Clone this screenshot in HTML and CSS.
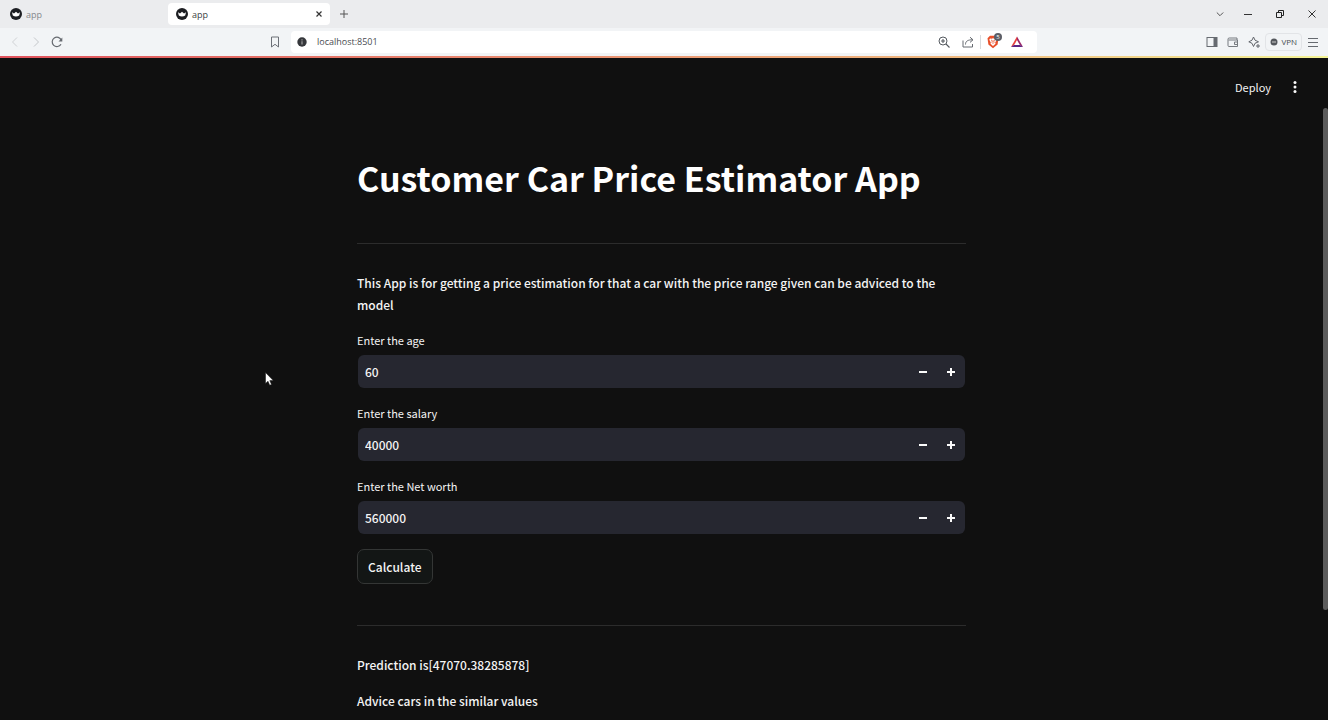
FILE: index.html
```html
<!DOCTYPE html>
<html lang="en">
<head>
    <meta charset="UTF-8">
    <meta name="viewport" content="width=device-width, initial-scale=1.0">
    <title>app</title>
    <link rel="stylesheet" href="styles.css">
</head>
<body>
    <!-- browser -->
    <div class="browser">
        <div class="tabs">
            <div class="tab">
                <svg class="favicon" viewBox="0 0 12 12"><circle cx="6" cy="6" r="6" fill="#1c1e22"/><path d="M2 4.200l2 1.300L6 3.800l2 1.700 2-1.300-.8 3.300Q6 9.500 2.800 7.500z" fill="#fff"/></svg>
                <span>app</span>
            </div>
            <div class="tab active">
                <svg class="favicon" viewBox="0 0 12 12"><circle cx="6" cy="6" r="6" fill="#1c1e22"/><path d="M2 4.200l2 1.300L6 3.800l2 1.700 2-1.300-.8 3.300Q6 9.500 2.800 7.500z" fill="#fff"/></svg>
                <span>app</span>
                <button class="tab-close" aria-label="Close tab"><svg width="6" height="6" viewBox="0 0 6 6"><path d="M.5.5l5 5M5.500.5l-5 5" stroke="#333" stroke-width="1.200"/></svg></button>
            </div>
            <button class="new-tab" aria-label="New tab"><svg width="8" height="8" viewBox="0 0 8 8"><path d="M4 0v8M0 4h8" stroke="#555" stroke-width="1"/></svg></button>
            <button class="search-tabs" aria-label="Search tabs"><svg width="8" height="8" viewBox="0 0 8 8"><path d="M.8 2.500L4 5.700l3.200-3.200" fill="none" stroke="#555"/></svg></button>
            <div class="window-btns">
                <button aria-label="Minimize"><svg width="8" height="8" viewBox="0 0 8 8"><path d="M0 4.500h8" stroke="#333"/></svg></button>
                <button aria-label="Restore"><svg width="8" height="8" viewBox="0 0 8 8"><path d="M.5 2.500h5v5h-5zM2.500 2.500v-2h5v5h-2" fill="none" stroke="#222"/></svg></button>
                <button aria-label="Close"><svg width="8" height="8" viewBox="0 0 8 8"><path d="M.5.5l7 7M7.500.5l-7 7" stroke="#333"/></svg></button>
            </div>
        </div>
        <div class="toolbar">
            <div class="nav">
                <button aria-label="Back"><svg width="12" height="12" viewBox="0 0 12 12"><path d="M8 1.500L3.500 6 8 10.500" fill="none" stroke="#d0d2d5"/></svg></button>
                <button aria-label="Forward"><svg width="12" height="12" viewBox="0 0 12 12"><path d="M4 1.500L8.500 6 4 10.500" fill="none" stroke="#c4c7ca"/></svg></button>
                <button aria-label="Reload"><svg width="12" height="12" viewBox="0 0 12 12"><path d="M10 8.200A4.700 4.700 0 1 1 10.300 4.200" fill="none" stroke="#666a70" stroke-width="1.200"/><path d="M11.300 1.500v4H7.500z" fill="#666a70"/></svg></button>
                <button class="bookmark" aria-label="Bookmark"><svg width="12" height="12" viewBox="0 0 12 12"><path d="M2.500 1h7v10L6 8.300 2.500 11z" fill="none" stroke="#6c7077"/></svg></button>
            </div>
            <div class="address">
                <svg width="10" height="10" viewBox="0 0 10 10"><circle cx="5" cy="5" r="4.700" fill="#35373b"/><path d="M5 4.300v3.200M5 2.300v1.100" stroke="#aaa" stroke-width="1.100"/></svg>
                <input class="url" type="text" value="localhost:8501" aria-label="Address">
                <button aria-label="Zoom"><svg width="12" height="12" viewBox="0 0 12 12"><circle cx="5" cy="5" r="4" fill="none" stroke="#555a60"/><path d="M8 8l3.500 3.500M3 5h4M5 3v4" stroke="#555a60" stroke-width="1.100"/></svg></button>
                <button aria-label="Share"><svg width="12" height="12" viewBox="0 0 12 12"><path d="M1 4.500v6.500h9.500V8M3.500 8.500C3.500 5 6 3.800 10.500 3.800M8 1.200l3 2.600-3 2.600" fill="none" stroke="#666a70"/></svg></button>
                <span class="divider"></span>
                <button class="shields" aria-label="Shields">
                    <svg width="12" height="14" viewBox="0 0 12 14"><path d="M3 .8h6l2.500 2.500-.9 6.200L6 13.300 1.400 9.500.5 3.300z" fill="#e8502a"/><path d="M3 3.500l1.500.3L6 3.300l1.500.5L9 3.500l.7 1.200-1.500 2.800.3 1.200L6 11 3.500 8.700l.3-1.200-1.500-2.800z" fill="#fff"/><path d="M4 5l1.300.6L5 7.500l1 1 1-1-.3-1.900L8 5" fill="none" stroke="#e8502a" stroke-width=".8"/></svg>
                    <span class="count">5</span>
                </button>
                <button aria-label="Rewards"><svg width="12" height="12" viewBox="0 0 12 12"><path d="M6 .5L0 11l3-1.700L6 4z" fill="#e8413c"/><path d="M6 .5L12 11 9 9.300 6 4z" fill="#9b2668"/><path d="M0 11h12L9 9H3z" fill="#5c2483"/></svg></button>
            </div>
            <div class="tools">
                <button aria-label="Sidebar"><svg width="12" height="12" viewBox="0 0 12 12"><rect x="1" y="1.500" width="10" height="9" fill="none" stroke="#666a70"/><path d="M7.500 1.500H11v9H7.500z" fill="#666a70"/></svg></button>
                <button aria-label="Wallet"><svg width="12" height="12" viewBox="0 0 12 12"><path d="M10 4V2H2.200A1.200 1.200 0 0 0 1 3.200V9.500a1 1 0 0 0 1 1h8.500V4H1.500M11 6H7.500v2.500H11" fill="none" stroke="#777b80"/></svg></button>
                <button aria-label="Leo"><svg width="12" height="12" viewBox="0 0 12 12"><path d="M5.500 1L7 4.200 10.500 5.800 7 7.300 5.500 10.500 4 7.300.8 5.800 4 4.200zM10 8v4M8 10h4" fill="none" stroke="#62666c"/></svg></button>
                <button class="vpn"><svg width="8" height="8" viewBox="0 0 8 8"><circle cx="4" cy="4" r="3.500" fill="#55585d"/><path d="M2 4h4" stroke="#ccc"/></svg>VPN</button>
                <button aria-label="Menu"><svg width="12" height="12" viewBox="0 0 12 12"><path d="M1 2.500h10M1 6.500h10M1 10.500h10" stroke="#666a70"/></svg></button>
            </div>
        </div>
    </div>

    <!-- app -->
    <div class="app">
        <div class="decoration"></div>
        <header class="app-header">
            <button class="deploy">Deploy</button>
            <button class="more" aria-label="Main menu"><svg width="4" height="12" viewBox="0 0 4 12"><circle cx="2" cy="1.500" r="1.500"/><circle cx="2" cy="6" r="1.500"/><circle cx="2" cy="10.500" r="1.500"/></svg></button>
        </header>
        <div class="view">
            <main class="content">
                <div class="block">
                    <h1>Customer Car Price Estimator App</h1>
                    <hr>
                    <p>This App is for getting a price estimation for that a car with the price range given can be adviced to the<br>model</p>
                    <div class="field">
                        <label for="age">Enter the age</label>
                        <div class="number">
                            <input id="age" type="number" value="60">
                            <button aria-label="Decrease age"><svg viewBox="0 0 8 8"><path d="M0 4h8"/></svg></button>
                            <button aria-label="Increase age"><svg viewBox="0 0 8 8"><path d="M0 4h8M4 0v8"/></svg></button>
                        </div>
                    </div>
                    <div class="field">
                        <label for="salary">Enter the salary</label>
                        <div class="number">
                            <input id="salary" type="number" value="40000">
                            <button aria-label="Decrease salary"><svg viewBox="0 0 8 8"><path d="M0 4h8"/></svg></button>
                            <button aria-label="Increase salary"><svg viewBox="0 0 8 8"><path d="M0 4h8M4 0v8"/></svg></button>
                        </div>
                    </div>
                    <div class="field">
                        <label for="worth">Enter the Net worth</label>
                        <div class="number">
                            <input id="worth" type="number" value="560000">
                            <button aria-label="Decrease net worth"><svg viewBox="0 0 8 8"><path d="M0 4h8"/></svg></button>
                            <button aria-label="Increase net worth"><svg viewBox="0 0 8 8"><path d="M0 4h8M4 0v8"/></svg></button>
                        </div>
                    </div>
                    <button class="calculate">Calculate</button>
                    <hr>
                    <p>Prediction is[47070.38285878]</p>
                    <p>Advice cars in the similar values</p>
                </div>
            </main>
            <div class="scroll"><div class="thumb"></div></div>
        </div>
    </div>

    <!-- mouse pointer -->
    <svg class="pointer" width="9" height="14" viewBox="0 0 9 14"><path d="M.5.5v11l2.500-2.300 1.700 4 1.800-.8-1.700-3.800h3.500z" fill="#fff" stroke="#111" stroke-width=".5"/></svg>
</body>
</html>
```
FILE: styles.css
```css
*{
    box-sizing: border-box;
    padding: 0;
    margin: 0;
}
body{
    display: flex;
    flex-direction: column;
    height: 100vh;
    overflow: hidden;
    background: #101010;
    color: #f4f4f4;
    font-family: "Noto Sans CJK SC", sans-serif;
    font-size: 12px;
    font-weight: 500;
}
button{
    display: flex;
    align-items: center;
    justify-content: center;
    border: 0;
    background: none;
    color: inherit;
    font: inherit;
}
input{
    min-width: 0;
    border: 0;
    outline: 0;
    background: none;
    color: inherit;
    font: inherit;
}
svg{
    display: block;
    flex: none;
}

/* browser */
.browser{
    flex: none;
    background: #ebecee;
    color: #4a4d52;
    font-family: "Open Sans", sans-serif;
    font-size: 9px;
    font-weight: 400;
}
.tabs{
    display: flex;
    align-items: center;
    height: 28px;
}
.tab{
    display: flex;
    align-items: center;
    gap: 4px;
    width: 162px;
    height: 22px;
    margin-right: 6px;
    padding: 0 8px;
    border-radius: 4px;
    color: #85888c;
}
.tab:first-child{
    padding-left: 10px;
}
.tab.active{
    background: #fff;
    color: #3c3f44;
}
.favicon{
    width: 12px;
    height: 12px;
}
.tab-close{
    margin-left: auto;
}
.new-tab{
    margin-left: 4px;
}
.search-tabs{
    margin: 0 20px 0 auto;
}
.window-btns{
    display: flex;
    gap: 24px;
    padding-right: 12px;
}
.toolbar{
    display: flex;
    align-items: center;
    height: 28px;
    padding-bottom: 1px;
    background: #f2f4f6;
}
.nav{
    display: flex;
    flex: 1;
    gap: 9px;
    padding-left: 9px;
}
.bookmark{
    margin: 0 10px 0 auto;
}
.address{
    display: flex;
    align-items: center;
    flex: 0 1 746px;
    gap: 12px;
    height: 22px;
    padding: 0 14px 0 6px;
    border-radius: 4px;
    background: #fff;
}
.url{
    flex: 1;
    margin-left: -2px;
}
.divider{
    width: 1px;
    height: 14px;
    margin: 0 -6px;
    background: #d8dadd;
}
.shields{
    position: relative;
}
.count{
    position: absolute;
    top: -2px;
    left: 7px;
    width: 8px;
    height: 8px;
    border-radius: 4px;
    background: #5b5e66;
    color: #fff;
    font-size: 6px;
    line-height: 8px;
}
.tools{
    display: flex;
    flex: 1;
    align-items: center;
    justify-content: flex-end;
    gap: 9px;
    padding-right: 9px;
}
.vpn{
    gap: 3px;
    height: 18px;
    margin: 0 -4px;
    padding: 0 4px;
    border: 1px solid #e2e4e7;
    border-radius: 4px;
    font-size: 8px;
}

/* app */
.app{
    display: flex;
    flex: 1;
    flex-direction: column;
    min-height: 0;
}
.decoration{
    flex: none;
    height: 2px;
    background: linear-gradient(90deg, #e0525c, #f0bd80 75%, #f5f598);
}
.app-header{
    display: flex;
    flex: none;
    align-items: center;
    justify-content: flex-end;
    gap: 22px;
    height: 50px;
    padding: 8px 31px 0 0;
    font-size: 11px;
    font-weight: 400;
}
.more{
    fill: #fafafa;
}
.view{
    display: flex;
    flex: 1;
    min-height: 0;
}
.content{
    flex: 1;
    overflow: hidden;
}
.block{
    max-width: 609px;
    margin: 0 auto;
    padding-top: 48px;
}
h1{
    padding-bottom: 2px;
    color: #fff;
    font-size: 34px;
    font-weight: 700;
    line-height: 44px;
}
hr{
    height: 1px;
    margin: 41px 0 28px;
    border: 0;
    background: #2c2c2c;
}
p{
    margin-bottom: 14px;
    line-height: 22px;
}
.field{
    margin-bottom: 15px;
}
label{
    display: block;
    margin-bottom: 4px;
    font-size: 11px;
    font-weight: 400;
    line-height: 21px;
}
.number{
    display: flex;
    height: 33px;
    margin: 0 1px;
    border-radius: 6px;
    background: #262730;
}
.number input{
    flex: 1;
    padding-left: 7px;
    appearance: textfield;
}
.number input::-webkit-inner-spin-button{
    appearance: none;
}
.number button{
    width: 28px;
}
.number svg{
    width: 8px;
    height: 8px;
    stroke: #fafafa;
    stroke-width: 2;
}
.calculate{
    height: 35px;
    padding: 0 10px;
    border: 1px solid #343635;
    border-radius: 7px;
    background: #131615;
}
.scroll{
    width: 5px;
}
.thumb{
    height: 82%;
    border-radius: 3px;
    background: #5c5c5c;
}
.pointer{
    position: absolute;
    top: 372px;
    left: 265px;
}
```
